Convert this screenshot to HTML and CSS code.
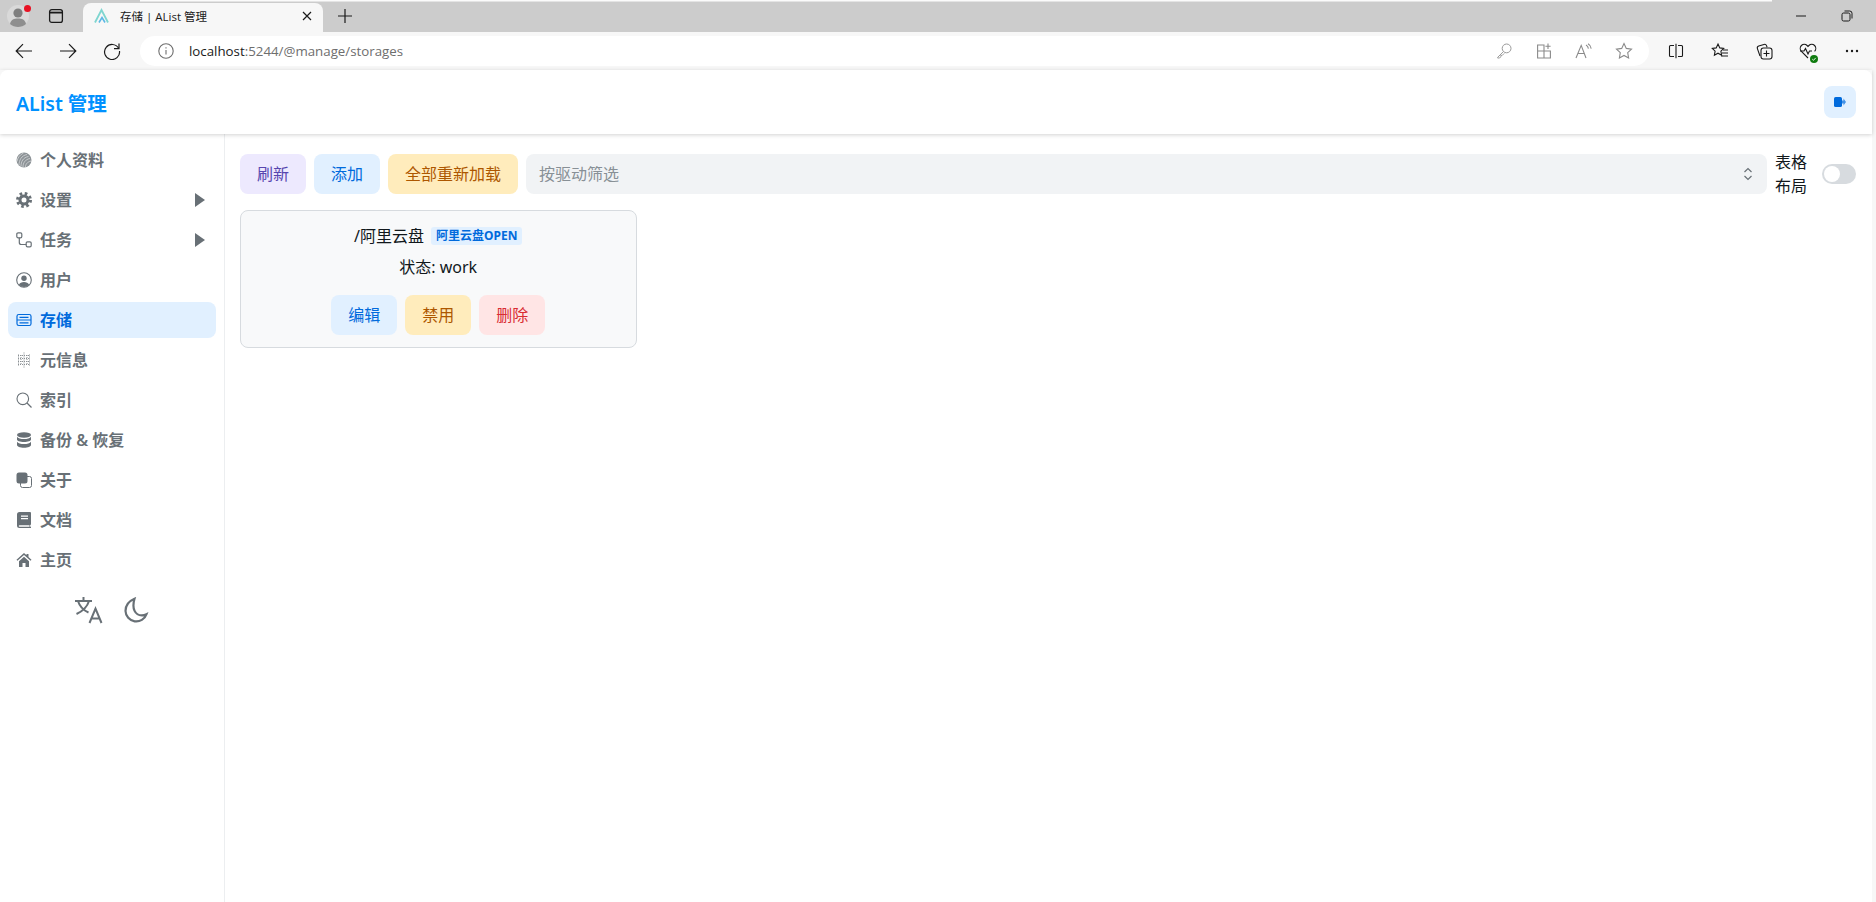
FILE: index.html
```html
<!DOCTYPE html>
<html lang="zh">
<head>
<meta charset="utf-8">
<title>存储 | AList 管理</title>
<link rel="stylesheet" href="styles.css">
</head>
<body>
<div class="browser">
  <div class="strip-edge"><div class="strip-edge-line"></div></div>
  <div class="tabstrip">
    <div class="slot avatar-slot">
      <span class="avatar">
        <svg width="22" height="22" viewBox="0 0 22 22"><circle cx="11" cy="11" r="11" fill="#d9d9d9"/><circle cx="11" cy="8" r="4.600" fill="#7f7f7f"/><path d="M3 19c1-4.500 4-5.500 8-5.500s7 1 8 5.500c-2 2-5 3-8 3s-6-1-8-3z" fill="#8e8e8e"/></svg>
        <span class="avatar-dot"></span>
      </span>
    </div>
    <div class="slot tabs-slot">
      <svg width="16" height="16" viewBox="0 0 16 16" fill="none" stroke="#1a1a1a" stroke-width="1.300"><rect x="1.600" y="1.600" width="12.800" height="12.800" rx="2.200"/><path d="M1.600 4.600h12.800" stroke-width="1.800"/></svg>
    </div>
    <div class="tab">
      <svg class="favicon" width="16" height="16" viewBox="0 0 16 16" fill="none"><path d="M1 14.500 7.500 2l6.500 12.500" stroke="#7fd6d0" stroke-width="1.800"/><path d="M5 14.500l3-5 3 5" stroke="#5cb7e6" stroke-width="1.600"/></svg>
      <span class="tab-title">存储 | AList 管理</span>
      <svg class="tab-close" width="10" height="10" viewBox="0 0 10 10" stroke="#1a1a1a" stroke-width="1.200"><path d="M1 1l8 8M9 1 1 9"/></svg>
    </div>
    <div class="slot plus-slot">
      <svg width="16" height="16" viewBox="0 0 16 16" stroke="#1a1a1a" stroke-width="1.200"><path d="M8 1v14M1 8h14"/></svg>
    </div>
    <div class="strip-space"></div>
    <div class="slot win-slot">
      <svg width="12" height="12" viewBox="0 0 12 12" stroke="#1a1a1a" stroke-width="1"><path d="M1 6h10"/></svg>
    </div>
    <div class="slot win-slot">
      <svg width="12" height="12" viewBox="0 0 12 12" fill="none" stroke="#1a1a1a" stroke-width="1"><rect x="1" y="3" width="8" height="8" rx="1.600"/><path d="M3.500 1h5.200A2.300 2.300 0 0 1 11 3.300v5.200"/></svg>
    </div>
  </div>
  <div class="toolbar">
    <div class="slot nav-slot">
      <svg width="18" height="16" viewBox="0 0 18 16" fill="none" stroke="#1a1a1a" stroke-width="1.200"><path d="M17 8H1.200M8 1.200 1.200 8 8 14.800"/></svg>
    </div>
    <div class="slot nav-slot">
      <svg width="18" height="16" viewBox="0 0 18 16" fill="none" stroke="#1a1a1a" stroke-width="1.200"><path d="M1 8h15.800M10 1.200 16.800 8 10 14.800"/></svg>
    </div>
    <div class="slot nav-slot">
      <svg width="18" height="18" viewBox="0 0 18 18" fill="none" stroke="#1a1a1a" stroke-width="1.200"><path d="M15.600 6.300A7.500 7.500 0 1 0 16.500 9"/><path d="M16 1.600v5h-5"/></svg>
    </div>
    <div class="address">
      <svg class="info-icon" width="16" height="16" viewBox="0 0 16 16" fill="none" stroke="#6e6e6e" stroke-width="1.100"><circle cx="8" cy="8" r="7.200"/><path d="M8 7v4.600M8 4.200v1.300"/></svg>
      <span class="url"><span class="url-host">localhost</span>:5244/@manage/storages</span>
      <div class="address-icons">
        <div class="slot addr-slot">
          <svg width="16" height="16" viewBox="0 0 16 16" fill="none" stroke="#9a9a9a" stroke-width="1"><circle cx="10.600" cy="5.400" r="4.400"/><path d="M7.400 8.600 1.800 14.200 1.600 15h2l1.200-1.200v-1.400h1.400l2-2"/></svg>
        </div>
        <div class="slot addr-slot">
          <svg width="16" height="16" viewBox="0 0 16 16" fill="none" stroke="#8a8a8a" stroke-width="1.100"><path d="M8 4V2H1.600v13h12.800V8H8zM8 8v7M1.600 8H8"/><path d="M12 .6v5.400M9.400 3.300h5.200"/></svg>
        </div>
        <div class="slot addr-slot">
          <svg width="18" height="16" viewBox="0 0 18 16" fill="none" stroke="#8a8a8a" stroke-width="1.100"><path d="M1 15 6.200 2.400 11 15M2.800 10.500h7M11 2c1.400.8 2.200 2 2.400 3.600M13 .8c1.800 1 3 2.800 3.200 4.800"/></svg>
        </div>
        <div class="slot addr-slot">
          <svg width="18" height="18" viewBox="0 0 18 18" fill="none" stroke="#8a8a8a" stroke-width="1.100"><path d="m9 1.600 2.300 4.800 5.200.7-3.800 3.600.9 5.200L9 13.400l-4.600 2.500.9-5.200L1.500 7.100l5.200-.7z"/></svg>
        </div>
      </div>
    </div>
    <div class="slot tool-slot">
      <svg width="16" height="16" viewBox="0 0 16 16" fill="none" stroke="#1a1a1a" stroke-width="1.100"><path d="M6 2.500H2.500a1 1 0 0 0-1 1v9a1 1 0 0 0 1 1H6M10 2.500h3.500a1 1 0 0 1 1 1v9a1 1 0 0 1-1 1H10M8 .8v14.400"/></svg>
    </div>
    <div class="slot tool-slot">
      <svg width="18" height="18" viewBox="0 0 18 18" fill="none" stroke="#1a1a1a" stroke-width="1.100"><path d="m7 2 1.800 3.900 3.900.5-2.800 2.800.7 4-3.600-2-3.600 2 .7-4L1.300 6.400l3.900-.5z"/><path d="M12 8h5M11 11h6M10 14h7"/></svg>
    </div>
    <div class="slot tool-slot">
      <svg width="18" height="18" viewBox="0 0 18 18" fill="none" stroke="#1a1a1a" stroke-width="1.100"><path d="M5 14 2.400 6.600a2 2 0 0 1 1.300-2.500L9 2.400a2 2 0 0 1 2.500 1.200l.6 1.600"/><rect x="6" y="6" width="11" height="11" rx="2.400"/><path d="M11.500 8.500v6M8.500 11.500h6"/></svg>
    </div>
    <div class="slot tool-slot">
      <span class="health">
        <svg width="18" height="18" viewBox="0 0 18 18" fill="none" stroke="#1a1a1a" stroke-width="1.100"><path d="M9 16 2.400 9.300a4.200 4.200 0 0 1 0-5.800 4.100 4.100 0 0 1 5.700 0l.9.900.9-.9a4.100 4.100 0 0 1 5.700 0 4.200 4.200 0 0 1 0 5.800"/><path d="M1 9h4l1.500-2.500L9 12l1.500-3H13"/></svg>
        <svg class="health-dot" width="8" height="8" viewBox="0 0 8 8"><circle cx="4" cy="4" r="4" fill="#107c10"/><path d="M2.300 4.200 3.500 5.300 5.700 2.900" fill="none" stroke="#fff" stroke-width=".9"/></svg>
      </span>
    </div>
    <div class="slot tool-slot">
      <svg width="14" height="4" viewBox="0 0 14 4" fill="#1a1a1a"><circle cx="2" cy="2" r="1.200"/><circle cx="7" cy="2" r="1.200"/><circle cx="12" cy="2" r="1.200"/></svg>
    </div>
  </div>
</div>

<div class="page">
  <header class="header">
    <h1 class="brand">AList 管理</h1>
    <button class="logout" type="button" aria-label="退出">
      <svg width="12" height="10" viewBox="0 0 12 10" fill="#006adc"><rect x="0" y="0" width="8" height="10" rx="1.600"/><path d="M8 3.500h1.500V1.500L12 5 9.500 8.500v-2H8z" opacity=".7"/></svg>
    </button>
  </header>
  <div class="body">
    <nav class="sidebar">
      <ul class="menu">
        <li class="menu-item">
          <svg class="menu-icon" viewBox="0 0 16 16"><circle cx="8" cy="8" r="7.500" fill="#8d9397"/><g fill="none" stroke="#dfe1e3" stroke-width=".7"><path d="M3 13.500C3 8 5.500 3.500 11 2.500M5 14.500C5 9.500 7 5.500 12.500 4.500M7 15C7 11 9 7.500 14 6.500M9.500 15C9.500 12.500 11 10 15 9M1 9.500C1.500 6 3.500 3 7.500 1"/></g></svg>
          <span class="menu-text">个人资料</span>
        </li>
        <li class="menu-item">
          <svg class="menu-icon" viewBox="0 0 16 16" fill="none" stroke="#687076"><circle cx="8" cy="8" r="4" stroke-width="3"/><circle cx="8" cy="8" r="6.500" stroke-width="3" stroke-dasharray="2.550 2.550"/></svg>
          <span class="menu-text">设置</span>
          <svg class="menu-arrow" width="10" height="14" viewBox="0 0 10 14" fill="#687076"><path d="M0 0l10 7-10 7z"/></svg>
        </li>
        <li class="menu-item">
          <svg class="menu-icon" viewBox="0 0 16 16" fill="none" stroke="#687076" stroke-width="1.200"><rect x=".8" y=".8" width="5" height="5" rx="1.300"/><rect x="10.200" y="9.800" width="5" height="5" rx="1.300"/><path d="M3.300 5.800v4.700a2 2 0 0 0 2 2h4.900"/></svg>
          <span class="menu-text">任务</span>
          <svg class="menu-arrow" width="10" height="14" viewBox="0 0 10 14" fill="#687076"><path d="M0 0l10 7-10 7z"/></svg>
        </li>
        <li class="menu-item">
          <svg class="menu-icon" viewBox="0 0 16 16"><circle cx="8" cy="8" r="7.300" fill="none" stroke="#687076" stroke-width="1.100"/><circle cx="8" cy="6.200" r="2.700" fill="#687076"/><path d="M2.900 12.800C3.800 10.800 5.600 10 8 10s4.200.8 5.100 2.800A7 7 0 0 1 8 15a7 7 0 0 1-5.100-2.200z" fill="#687076"/></svg>
          <span class="menu-text">用户</span>
        </li>
        <li class="menu-item menu-item-active">
          <svg class="menu-icon" viewBox="0 0 16 16" fill="none" stroke="#006adc" stroke-width="1.200"><rect x="1" y="2.500" width="14" height="11" rx="1.800"/><path d="M1 8h14M3.500 5.300h9M3.500 10.800h9"/></svg>
          <span class="menu-text">存储</span>
        </li>
        <li class="menu-item">
          <svg class="menu-icon" viewBox="0 0 16 16" fill="none" stroke="#8b9094" stroke-width="1" stroke-dasharray="1 1"><path d="M2 3.500h12M2 6.500h12M2 9.500h12M2 12.500h12M2.500 2.500v11M8 .5v15M13.500 2.500v11M5 3v10M11 3v10"/></svg>
          <span class="menu-text">元信息</span>
        </li>
        <li class="menu-item">
          <svg class="menu-icon" viewBox="0 0 16 16" fill="none" stroke="#687076" stroke-width="1.100"><circle cx="6.800" cy="6.800" r="5.800"/><path d="M11 11l4.500 4.500" stroke-width="1.300"/></svg>
          <span class="menu-text">索引</span>
        </li>
        <li class="menu-item">
          <svg class="menu-icon" viewBox="0 0 16 16" fill="#687076"><ellipse cx="8" cy="3" rx="7" ry="2.700"/><path d="M1 4.700c1 1.600 3.800 2.300 7 2.300s6-.7 7-2.300V7.500C15 9 12 10 8 10S1 9 1 7.500z"/><path d="M1 9.700c1 1.500 3.800 2.300 7 2.300s6-.8 7-2.300V13c0 1.500-3 2.700-7 2.700S1 14.500 1 13z"/></svg>
          <span class="menu-text">备份 &amp; 恢复</span>
        </li>
        <li class="menu-item">
          <svg class="menu-icon" viewBox="0 0 16 16"><rect x="4.500" y="4.500" width="11" height="11" rx="2" fill="none" stroke="#687076" stroke-width="1"/><rect x=".5" y=".5" width="11" height="11" rx="2.500" fill="#687076"/></svg>
          <span class="menu-text">关于</span>
        </li>
        <li class="menu-item">
          <svg class="menu-icon" viewBox="0 0 16 16" fill="#687076"><path d="M3.500 0H14a1 1 0 0 1 1 1v11.500l-.8.5v1.500l.8.500v1H3.500A2.500 2.500 0 0 1 1 13.500v-11A2.500 2.500 0 0 1 3.500 0z"/><path d="M3.500 13.200H13.500v1.500H3.500a.75.75 0 0 1 0-1.500zM5 3.500h7v1.200H5zM5 6h7v1.200H5z" fill="#fff"/></svg>
          <span class="menu-text">文档</span>
        </li>
        <li class="menu-item">
          <svg class="menu-icon" viewBox="0 0 16 16" fill="#687076"><path d="M8 1 .5 7.800l.9 1L8 2.900l6.600 5.900.9-1L12.500 5V2h-2v1.200z"/><path d="M3 9.300 8 4.800l5 4.500V15H9.500v-4h-3v4H3z"/></svg>
          <span class="menu-text">主页</span>
        </li>
      </ul>
      <div class="side-actions">
        <svg width="28" height="28" viewBox="0 0 28 28" fill="none" stroke="#687076" stroke-width="2"><path d="M0 5h17M8.500 1v4M14 5c-1.500 5-6 10-12.500 13M3 5c1.500 5 6 9.500 10.500 11.500"/><path d="M14.500 27 20.500 12.500 26.500 27M16.500 22.500h8"/></svg>
        <svg width="26" height="26" viewBox="0 0 26 26" fill="none" stroke="#687076" stroke-width="2.200"><path d="M10.500 1.800C6.500 3.500 1.500 7.500 1.500 14a10.800 10.800 0 0 0 21 3.200c-1.500.8-3 1.200-4.700 1.200-6.500 0-10.300-6.500-7.300-16.600z"/></svg>
      </div>
    </nav>
    <main class="content">
      <div class="controls">
        <button class="btn btn-info" type="button">刷新</button>
        <button class="btn btn-primary" type="button">添加</button>
        <button class="btn btn-warning" type="button">全部重新加载</button>
        <div class="select">
          <span class="select-text">按驱动筛选</span>
          <svg width="10" height="14" viewBox="0 0 10 14" fill="none" stroke="#687076" stroke-width="1.200"><path d="M1.500 5 5 1.500 8.500 5M1.500 9 5 12.500 8.500 9"/></svg>
        </div>
        <span class="switch-label">表格布局</span>
        <span class="switch"><span class="switch-knob"></span></span>
      </div>
      <div class="grid">
        <article class="card">
          <div class="card-title">
            <span>/阿里云盘</span>
            <span class="badge">阿里云盘OPEN</span>
          </div>
          <p class="card-status">状态: work</p>
          <div class="card-actions">
            <button class="btn btn-primary" type="button">编辑</button>
            <button class="btn btn-warning" type="button">禁用</button>
            <button class="btn btn-danger" type="button">删除</button>
          </div>
        </article>
      </div>
    </main>
  </div>
</div>
</body>
</html>
```
FILE: styles.css
```css
* { box-sizing: border-box; }
html, body { height: 100%; margin: 0; }
body {
  display: flex;
  flex-direction: column;
  overflow: hidden;
  background: #f7f7f7;
  color: #11181c;
  font-family: "Noto Sans", "Noto Sans CJK SC", sans-serif;
  font-size: 16px;
}
svg { display: block; flex: none; }

/* browser chrome */
.browser { flex: none; font-family: "Open Sans", "Noto Sans CJK SC", sans-serif; }
.strip-edge { height: 3px; background: #ccc; padding-left: 140px; padding-right: 104px; }
.strip-edge-line { height: 2px; background: #fbfbfb; border-bottom: 1px solid #e4e4e4; }
.tabstrip { height: 29px; background: #ccc; display: flex; align-items: stretch; }
.slot { display: flex; align-items: center; justify-content: center; }
.avatar-slot { width: 36px; padding-bottom: 3px; }
.avatar { position: relative; display: block; }
.avatar-dot {
  position: absolute; right: -2px; top: 0;
  width: 7px; height: 7px; border-radius: 50%;
  background: #e81123;
}
.tabs-slot { width: 40px; padding-bottom: 3px; }
.tab {
  width: 240px; margin-left: 7px;
  background: #f7f7f7;
  border-radius: 8px 8px 0 0;
  display: flex; align-items: center;
  padding: 0 11px 3px;
  font-size: 11.5px;
  color: #1a1a1a;
}
.favicon { margin-right: 10px; }
.tab-title { flex: 1; white-space: nowrap; }
.plus-slot { width: 36px; margin-left: 4px; padding-bottom: 3px; }
.strip-space { flex: 1; }
.win-slot { width: 46px; padding-bottom: 3px; }
.win-slot:last-child { margin-right: 6px; }

.toolbar { height: 38px; background: #f7f7f7; display: flex; align-items: center; padding: 0 2px; }
.nav-slot { width: 44px; height: 38px; }
.tool-slot { width: 44px; height: 38px; }
.address {
  flex: 1; height: 30px; margin: 0 5px 0 6px;
  background: #fff; border-radius: 15px;
  display: flex; align-items: center;
  padding: 0 5px 0 18px;
}
.info-icon { margin-right: 15px; }
.url { font-size: 13.3px; color: #6e6e6e; flex: 1; white-space: nowrap; }
.url-host { color: #1a1a1a; }
.address-icons { display: flex; }
.addr-slot { width: 40px; height: 30px; }
.health { position: relative; display: block; }
.health-dot { position: absolute; right: -1px; bottom: -3px; }

/* page */
.page {
  flex: 1; min-height: 0;
  margin-right: 4px;
  background: #fff;
  border-radius: 8px 8px 0 0;
  display: flex; flex-direction: column;
}
.header {
  flex: none; height: 64px;
  display: flex; align-items: center; justify-content: space-between;
  padding: 0 16px;
  box-shadow: 0 1px 4px rgba(0, 0, 0, .18);
  position: relative;
}
.brand { margin: 3px 0 0; font-size: 19.5px; font-weight: 600; color: #0091ff; line-height: 1; }
.logout {
  width: 32px; height: 32px; padding: 0; border: 0;
  border-radius: 8px; background: #e1f0ff;
  display: flex; align-items: center; justify-content: center;
}
.body { flex: 1; min-height: 0; display: flex; }

.sidebar { flex: none; width: 225px; border-right: 1px solid #eceef0; padding: 8px; }
.menu { list-style: none; margin: 0; padding: 0; display: flex; flex-direction: column; gap: 4px; }
.menu-item {
  height: 36px; padding: 0 8px;
  border-radius: 8px;
  display: flex; align-items: center; gap: 8px;
  color: #687076; font-weight: 600; font-size: 16px;
}
.menu-item-active { background: #e1f0ff; color: #006adc; }
.menu-icon { width: 16px; height: 16px; }
.menu-text { flex: 1; padding-bottom: 2px; }
.menu-arrow { margin-right: 3px; }
.side-actions { display: flex; justify-content: center; align-items: center; gap: 21px; margin-top: 18px; }

.content { flex: 1; min-width: 0; padding: 16px 16px 16px 15px; }
.controls { display: flex; align-items: center; gap: 8px; }
.btn {
  height: 40px; padding: 0 17px 2px; border: 0;
  border-radius: 8px;
  font: inherit; font-size: 16px;
  white-space: nowrap;
}
.btn-info { background: #ede9fe; color: #5746af; }
.btn-primary { background: #e1f0ff; color: #006adc; }
.btn-warning { background: #ffecbc; color: #ad5700; }
.btn-danger { background: #ffe5e5; color: #d92d33; }
.select {
  flex: 1; height: 40px;
  background: #f1f3f5; border-radius: 8px;
  display: flex; align-items: center; justify-content: space-between;
  padding: 0 14px 0 13px;
}
.select-text { color: #889096; padding-bottom: 2px; }
.switch-label { width: 32px; line-height: 24px; }
.switch {
  width: 34px; height: 20px; margin-left: 7px;
  background: #d7dbdf; border-radius: 10px;
  padding: 2px; display: block;
}
.switch-knob { display: block; width: 16px; height: 16px; border-radius: 50%; background: #fff; }

.grid { display: grid; grid-template-columns: repeat(4, 1fr); gap: 10px; margin-top: 12px; }
.card {
  background: #f8f9fa;
  border: 1px solid #d7dbdf;
  border-radius: 8px;
  padding: 13px 12px 12px;
  display: flex; flex-direction: column; align-items: center;
}
.card-title { display: flex; align-items: center; gap: 7px; line-height: 24px; }
.badge {
  height: 18px; padding: 0 5px;
  border-radius: 3px;
  background: #e1f0ff; color: #006adc;
  font-size: 12px; font-weight: 700; line-height: 18px;
}
.card-status { margin: 7px 0 16px; line-height: 24px; }
.card-actions { display: flex; gap: 8px; }
```
